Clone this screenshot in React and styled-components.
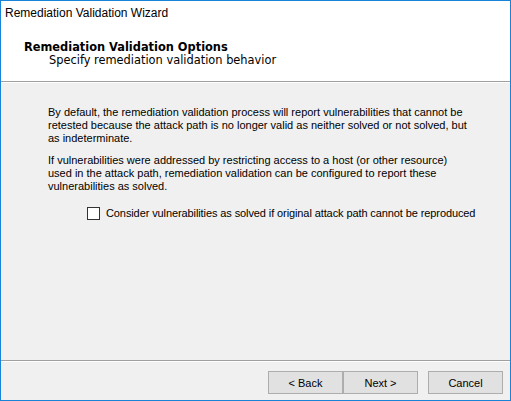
import React from 'react';
import styled, { createGlobalStyle } from 'styled-components';

const GlobalStyle = createGlobalStyle`
  html, body {
    margin: 0;
    padding: 0;
    background: #ffffff;
  }
  * {
    box-sizing: border-box;
  }
`;

const Window = styled.div`
  width: 511px;
  height: 401px;
  border: 1px solid #1883d7;
  background: #f0f0f0;
  display: flex;
  flex-direction: column;
  font-family: 'Liberation Sans', Arial, sans-serif;
  color: #000;
`;

const TitleBar = styled.div`
  height: 30px;
  flex: none;
  background: #fff;
  display: flex;
  align-items: center;
  padding: 0 0 6px 4px;
  font-family: 'Liberation Sans', Arial, sans-serif;
  font-size: 12px;
  color: #000;
`;

const Header = styled.div`
  height: 51px;
  flex: none;
  background: #fff;
  padding: 10px 0 0 23px;
  font-family: 'DejaVu Sans', Verdana, sans-serif;
  font-size: 11.4px;
  border-bottom: 1px solid #a0a0a0;
  box-shadow: 0 1px 0 #ffffff;
`;

const HeaderTitle = styled.div`
  font-weight: bold;
  line-height: 13px;
`;

const HeaderSubtitle = styled.div`
  line-height: 13px;
  padding-left: 25px;
`;

const Body = styled.div`
  flex: 1;
  margin-top: 1px;
  padding: 23px 0 0 47px;
  font-size: 11px;
  line-height: 13px;
`;

const Paragraph = styled.p`
  margin: 0 0 9px 0;
  white-space: nowrap;
`;

const CheckRow = styled.label`
  display: flex;
  align-items: center;
  gap: 6px;
  margin: 14px 0 0 39px;
  white-space: nowrap;
  letter-spacing: -0.1px;
`;

const CheckBox = styled.span`
  width: 13px;
  height: 13px;
  border: 1px solid #333;
  background: #fff;
  flex: none;
`;

const Footer = styled.div`
  height: 40px;
  flex: none;
  border-top: 1px solid #a0a0a0;
  box-shadow: inset 0 1px 0 #ffffff;
  display: flex;
  justify-content: flex-end;
  align-items: flex-start;
  padding: 10px 7px 0 0;
`;

const ButtonGroup = styled.div`
  display: flex;
  margin-right: ${(p) => p.$gap || 0}px;
`;

const Button = styled.button`
  width: 75px;
  height: 23px;
  border: 1px solid #adadad;
  background: #e1e1e1;
  font-family: 'Liberation Sans', Arial, sans-serif;
  font-size: 11px;
  color: #000;
  padding: 0;
  margin: 0;
`;

export default function App() {
  return (
    <>
      <GlobalStyle />
      <Window>
        <TitleBar>Remediation Validation Wizard</TitleBar>
        <Header>
          <HeaderTitle>Remediation Validation Options</HeaderTitle>
          <HeaderSubtitle>Specify remediation validation behavior</HeaderSubtitle>
        </Header>
        <Body>
          <Paragraph>
            By default, the remediation validation process will report vulnerabilities that cannot be
            <br />
            retested because the attack path is no longer valid as neither solved or not solved, but
            <br />
            as indeterminate.
          </Paragraph>
          <Paragraph>
            If vulnerabilities were addressed by restricting access to a host (or other resource)
            <br />
            used in the attack path, remediation validation can be configured to report these
            <br />
            vulnerabilities as solved.
          </Paragraph>
          <CheckRow>
            <CheckBox />
            Consider vulnerabilities as solved if original attack path cannot be reproduced
          </CheckRow>
        </Body>
        <Footer>
          <ButtonGroup $gap={10}>
            <Button>&lt; Back</Button>
            <Button>Next &gt;</Button>
          </ButtonGroup>
          <Button>Cancel</Button>
        </Footer>
      </Window>
    </>
  );
}
